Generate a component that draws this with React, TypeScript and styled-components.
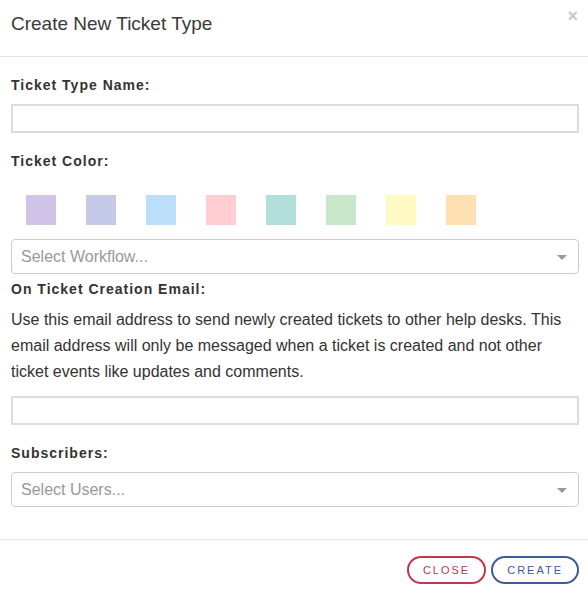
import React from "react";
import styled, { createGlobalStyle } from "styled-components";

const GlobalStyle = createGlobalStyle`
  html, body {
    margin: 0;
    padding: 0;
    background: #fff;
  }
  body {
    font-family: "Liberation Sans", Arial, sans-serif;
    color: #333;
  }
  * {
    box-sizing: border-box;
  }
`;

const swatches = [
  "#d1c4e9",
  "#c5cae9",
  "#bbdefb",
  "#ffcdd2",
  "#b2dfdb",
  "#c8e6c9",
  "#fff9c4",
  "#ffe0b2",
];

const Modal = styled.div`
  width: 588px;
  height: 592px;
  background: #fff;
  display: flex;
  flex-direction: column;
`;

const Header = styled.div`
  position: relative;
  height: 57px;
  padding: 13px 11px 0;
  border-bottom: 1px solid #e5e5e5;
`;

const Title = styled.h4`
  margin: 0;
  font-size: 19px;
  font-weight: normal;
  line-height: 22px;
  color: #3a3a3a;
`;

const CloseX = styled.button`
  position: absolute;
  top: 5px;
  right: 10px;
  border: 0;
  background: none;
  padding: 0;
  font-family: "Liberation Sans", Arial, sans-serif;
  font-size: 18px;
  font-weight: bold;
  line-height: 22px;
  color: #c8c8c8;
  cursor: pointer;
`;

const Body = styled.div`
  flex: 1;
  padding: 18px 9px 0 11px;
  display: flex;
  flex-direction: column;
`;

const Label = styled.label<{ $gap?: number; $top?: number }>`
  display: block;
  font-size: 14px;
  font-weight: bold;
  letter-spacing: 1px;
  line-height: 20px;
  color: #333;
  margin-top: ${(p) => p.$top ?? 0}px;
  margin-bottom: ${(p) => p.$gap ?? 0}px;
`;

const TextInput = styled.input<{ $after?: number }>`
  display: block;
  width: 100%;
  height: 29px;
  border: 2px solid #ddd;
  border-radius: 0;
  outline: none;
  padding: 0 8px;
  font-family: inherit;
  font-size: 14px;
  margin-bottom: ${(p) => p.$after ?? 0}px;
`;

const SwatchRow = styled.div`
  display: flex;
  padding: 24px 0 14px;
`;

const Swatch = styled.span<{ $color: string }>`
  width: 30px;
  height: 30px;
  margin: 0 15px;
  background: ${(p) => p.$color};
  cursor: pointer;
`;

const Select = styled.div`
  position: relative;
  height: 35px;
  border: 1px solid #ccc;
  border-radius: 4px;
  padding: 0 30px 0 9px;
  display: flex;
  align-items: center;
  font-size: 16px;
  color: #999;
  cursor: pointer;
`;

const Caret = styled.span`
  position: absolute;
  right: 11px;
  top: 15px;
  width: 0;
  height: 0;
  border-left: 5px solid transparent;
  border-right: 5px solid transparent;
  border-top: 5px solid #999;
`;

const Help = styled.p`
  margin: 8px 0 11px;
  font-size: 16px;
  line-height: 26px;
  color: #333;
`;

const Footer = styled.div`
  height: 53px;
  border-top: 1px solid #e5e5e5;
  display: flex;
  justify-content: flex-end;
  align-items: flex-start;
  gap: 5px;
  padding: 16px 9px 0 0;
`;

const PillButton = styled.button<{ $tone: string }>`
  height: 28px;
  padding: 0 14px;
  border: 2px solid ${(p) => p.$tone};
  border-radius: 14px;
  background: #fff;
  color: ${(p) => p.$tone};
  font-family: "Liberation Sans", Arial, sans-serif;
  font-size: 11px;
  letter-spacing: 2px;
  text-transform: uppercase;
  cursor: pointer;
`;

export default function App() {
  return (
    <>
      <GlobalStyle />
      <Modal>
        <Header>
          <Title>Create New Ticket Type</Title>
          <CloseX aria-label="Close">×</CloseX>
        </Header>
        <Body>
          <Label $gap={9}>Ticket Type Name:</Label>
          <TextInput $after={18} />
          <Label>Ticket Color:</Label>
          <SwatchRow>
            {swatches.map((c) => (
              <Swatch key={c} $color={c} />
            ))}
          </SwatchRow>
          <Select>
            Select Workflow...
            <Caret />
          </Select>
          <Label $top={5}>On Ticket Creation Email:</Label>
          <Help>
            Use this email address to send newly created tickets to other help
            desks. This email address will only be messaged when a ticket is
            created and not other ticket events like updates and comments.
          </Help>
          <TextInput $after={18} />
          <Label $gap={9}>Subscribers:</Label>
          <Select>
            Select Users...
            <Caret />
          </Select>
        </Body>
        <Footer>
          <PillButton $tone="#c2364d">Close</PillButton>
          <PillButton $tone="#3c5c99">Create</PillButton>
        </Footer>
      </Modal>
    </>
  );
}
